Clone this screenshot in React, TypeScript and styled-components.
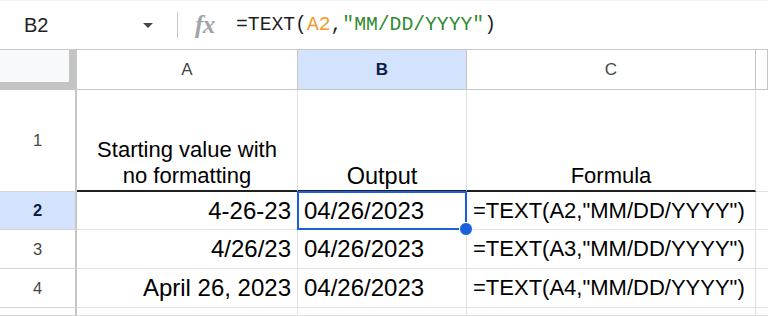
import React from "react";
import styled, { createGlobalStyle, css } from "styled-components";

const GlobalStyle = createGlobalStyle`
  html, body { margin: 0; padding: 0; background: #ffffff; }
  body { font-family: "Liberation Sans", Arial, sans-serif; }
`;

const Page = styled.div`
  width: 768px;
  height: 316px;
  overflow: hidden;
  background: #ffffff;
`;

const FormulaBar = styled.div`
  height: 50px;
  box-sizing: border-box;
  border-top: 1px solid #f1f3f4;
  border-bottom: 1px solid #c7c7c7;
  display: flex;
  align-items: center;
`;

const NameBox = styled.div`
  width: 165px;
  box-sizing: border-box;
  padding: 0 12px 0 24px;
  display: flex;
  align-items: center;
  justify-content: space-between;
  font-size: 20px;
  color: #1f1f1f;
`;

const Caret = styled.span`
  width: 0;
  height: 0;
  border-left: 5.5px solid transparent;
  border-right: 5.5px solid transparent;
  border-top: 5.5px solid #444746;
`;

const Divider = styled.span`
  width: 1px;
  height: 26px;
  background: #c4c7c5;
  margin: 0 0 0 12px;
`;

const Fx = styled.span`
  margin-left: 17px;
  width: 27px;
  font-family: "Liberation Serif", "Times New Roman", serif;
  font-style: italic;
  font-weight: bold;
  font-size: 25px;
  color: #a0a4a8;
  letter-spacing: -0.5px;
`;

const FormulaText = styled.div`
  margin-left: 14px;
  font-family: "Liberation Mono", "DejaVu Sans Mono", monospace;
  font-size: 19.7px;
  color: #1f1f1f;
  white-space: pre;
`;

const Ref = styled.span`
  color: #f09a2b;
`;

const Str = styled.span`
  color: #2e8b2e;
`;

const Grid = styled.div`
  display: grid;
  grid-template-columns: 77px 221px 169px 289px 1fr;
  grid-template-rows: 40px 102px 38px 39px 39px 1fr;
  height: 266px;
`;

const Corner = styled.div`
  background: #f8f9fa;
  border-right: 1px solid #c4c7c5;
  border-bottom: 1px solid #c4c7c5;
  box-shadow: inset -7px -7px 0 0 #c4c4c4;
`;

const ColHead = styled.div<{ $active?: boolean }>`
  display: flex;
  align-items: center;
  justify-content: center;
  border-right: 1px solid #c4c7c5;
  border-bottom: 1px solid #c4c7c5;
  font-size: 17px;
  color: #444746;
  background: #ffffff;
  ${(p) =>
    p.$active &&
    css`
      background: #d3e3fd;
      color: #0b1d45;
      font-weight: bold;
    `}
`;

const RowHead = styled.div<{ $active?: boolean }>`
  display: flex;
  align-items: center;
  justify-content: center;
  border-right: 2px solid #c4c7c5;
  border-bottom: 1px solid #d6d6d6;
  font-size: 16.5px;
  color: #444746;
  background: #ffffff;
  ${(p) =>
    p.$active &&
    css`
      background: #d3e3fd;
      color: #0b1d45;
      font-weight: bold;
    `}
`;

type Align = "left" | "right" | "center";

const Cell = styled.div<{ $align?: Align; $title?: boolean; $size?: number }>`
  position: relative;
  display: flex;
  align-items: ${(p) => (p.$title ? "flex-end" : "center")};
  justify-content: ${(p) =>
    p.$align === "right" ? "flex-end" : p.$align === "center" ? "center" : "flex-start"};
  text-align: ${(p) => p.$align ?? "left"};
  padding: ${(p) => (p.$title ? "0 6px 1px 6px" : "0 6px")};
  box-sizing: border-box;
  border-right: 1px solid #e1e1e1;
  border-bottom: ${(p) => (p.$title ? "2px solid #1f1f1f" : "1px solid #e1e1e1")};
  font-size: ${(p) => p.$size ?? 22}px;
  line-height: 26px;
  color: #000000;
  white-space: nowrap;
  min-width: 0;
`;

const EdgeCell = styled.div`
  border-bottom: 1px solid #e1e1e1;
`;

const Selection = styled.div`
  position: absolute;
  left: -1px;
  top: -1px;
  right: -1px;
  bottom: -1px;
  border: 2px solid #1a5fdc;
  pointer-events: none;
  z-index: 2;
`;

const Handle = styled.span`
  position: absolute;
  right: -8px;
  bottom: -8px;
  width: 12px;
  height: 12px;
  border-radius: 50%;
  background: #1a5fdc;
  border: 1px solid #ffffff;
`;

const rows = [
  { n: "2", a: "4-26-23", f: "=TEXT(A2,\"MM/DD/YYYY\")", active: true },
  { n: "3", a: "4/26/23", f: "=TEXT(A3,\"MM/DD/YYYY\")" },
  { n: "4", a: "April 26, 2023", f: "=TEXT(A4,\"MM/DD/YYYY\")" },
];

export default function App() {
  return (
    <Page>
      <GlobalStyle />
      <FormulaBar>
        <NameBox>
          <span>B2</span>
          <Caret />
        </NameBox>
        <Divider />
        <Fx>fx</Fx>
        <FormulaText>
          =TEXT(<Ref>A2</Ref>,<Str>"MM/DD/YYYY"</Str>)
        </FormulaText>
      </FormulaBar>
      <Grid>
        <Corner />
        <ColHead>A</ColHead>
        <ColHead $active>B</ColHead>
        <ColHead>C</ColHead>
        <ColHead />

        <RowHead>1</RowHead>
        <Cell $align="center" $title>
          Starting value with
          <br />
          no formatting
        </Cell>
        <Cell $align="center" $title $size={23.5}>
          Output
        </Cell>
        <Cell $align="center" $title>
          Formula
        </Cell>
        <EdgeCell />

        {rows.map((r) => (
          <React.Fragment key={r.n}>
            <RowHead $active={r.active}>{r.n}</RowHead>
            <Cell $align="right" $size={24}>
              {r.a}
            </Cell>
            <Cell $size={24}>
              04/26/2023
              {r.active && (
                <Selection>
                  <Handle />
                </Selection>
              )}
            </Cell>
            <Cell>{r.f}</Cell>
            <EdgeCell />
          </React.Fragment>
        ))}

        <RowHead />
        <Cell />
        <Cell />
        <Cell />
        <EdgeCell />
      </Grid>
    </Page>
  );
}
